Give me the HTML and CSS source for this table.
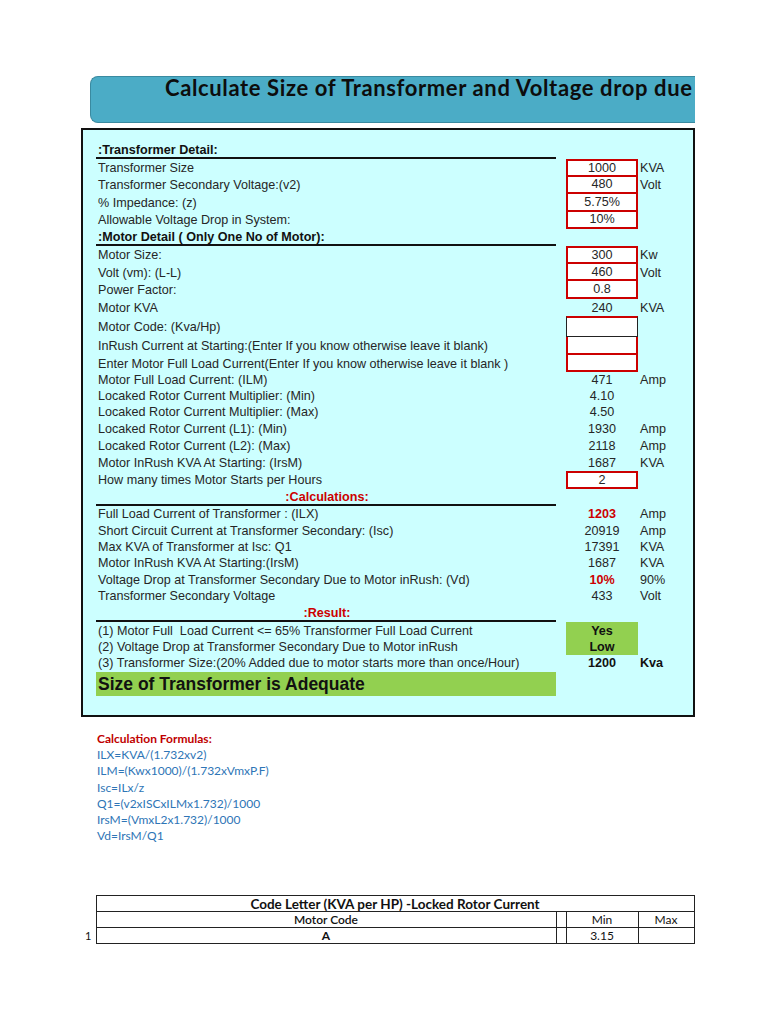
FILE: index.html
```html
<!DOCTYPE html>
<html>
<head>
<meta charset="utf-8">
<link rel="stylesheet" href="styles.css">
</head>
<body>
<div class="page">
  <div class="title">Calculate Size of Transformer and Voltage drop due</div>

  <div class="sheet">
    <div class="rows">
      <div class="row"><div class="label head">:Transformer Detail:</div></div>
      <div class="row"><div class="label">Transformer Size</div><div class="val in">1000</div><div class="unit">KVA</div></div>
      <div class="row"><div class="label">Transformer Secondary Voltage:(v2)</div><div class="val in join">480</div><div class="unit">Volt</div></div>
      <div class="row"><div class="label">% Impedance: (z)</div><div class="val in join">5.75%</div></div>
      <div class="row"><div class="label">Allowable Voltage Drop in System:</div><div class="val in join">10%</div></div>
      <div class="row"><div class="label head">:Motor Detail ( Only One No of Motor):</div></div>
      <div class="row"><div class="label">Motor Size:</div><div class="val in">300</div><div class="unit">Kw</div></div>
      <div class="row"><div class="label">Volt (vm): (L-L)</div><div class="val in join">460</div><div class="unit">Volt</div></div>
      <div class="row"><div class="label">Power Factor:</div><div class="val in join">0.8</div></div>
      <div class="row"><div class="label">Motor KVA</div><div class="val">240</div><div class="unit">KVA</div></div>
      <div class="row"><div class="label">Motor Code: (Kva/Hp)</div><div class="val code"></div></div>
      <div class="row"><div class="label">InRush Current at Starting:(Enter If you know otherwise leave it blank)</div><div class="val in join"></div></div>
      <div class="row"><div class="label">Enter Motor Full Load Current(Enter If you know otherwise leave it blank )</div><div class="val in join"></div></div>
      <div class="row"><div class="label">Motor Full Load Current: (ILM)</div><div class="val">471</div><div class="unit">Amp</div></div>
      <div class="row"><div class="label">Locaked Rotor Current Multiplier: (Min)</div><div class="val">4.10</div></div>
      <div class="row"><div class="label">Locaked Rotor Current Multiplier: (Max)</div><div class="val">4.50</div></div>
      <div class="row"><div class="label">Locaked Rotor Current (L1): (Min)</div><div class="val">1930</div><div class="unit">Amp</div></div>
      <div class="row"><div class="label">Locaked Rotor Current (L2): (Max)</div><div class="val">2118</div><div class="unit">Amp</div></div>
      <div class="row"><div class="label">Motor InRush KVA At Starting: (IrsM)</div><div class="val">1687</div><div class="unit">KVA</div></div>
      <div class="row"><div class="label">How many times Motor Starts per Hours</div><div class="val in">2</div></div>
      <div class="row"><div class="label head center red">:Calculations:</div></div>
      <div class="row"><div class="label">Full Load Current of Transformer : (ILX)</div><div class="val red strong">1203</div><div class="unit">Amp</div></div>
      <div class="row"><div class="label">Short Circuit Current at Transformer Secondary: (Isc)</div><div class="val">20919</div><div class="unit">Amp</div></div>
      <div class="row"><div class="label">Max KVA of Transformer at Isc: Q1</div><div class="val">17391</div><div class="unit">KVA</div></div>
      <div class="row"><div class="label">Motor InRush KVA At Starting:(IrsM)</div><div class="val">1687</div><div class="unit">KVA</div></div>
      <div class="row"><div class="label">Voltage Drop at Transformer Secondary Due to Motor inRush: (Vd)</div><div class="val red strong">10%</div><div class="unit">90%</div></div>
      <div class="row"><div class="label">Transformer Secondary Voltage</div><div class="val">433</div><div class="unit">Volt</div></div>
      <div class="row"><div class="label head center red">:Result:</div></div>
      <div class="row"><div class="label">(1) Motor Full&nbsp; Load Current &lt;= 65% Transformer Full Load Current</div><div class="val ok">Yes</div></div>
      <div class="row"><div class="label">(2) Voltage Drop at Transformer Secondary Due to Motor inRush</div><div class="val ok">Low</div></div>
      <div class="row"><div class="label">(3) Transformer Size:(20% Added due to motor starts more than once/Hour)</div><div class="val strong">1200</div><div class="unit strong">Kva</div></div>
    </div>
    <div class="verdict">Size of Transformer is Adequate</div>
  </div>

  <div class="formulas">
    <div class="f-title">Calculation Formulas:</div>
    <div>ILX=KVA/(1.732xv2)</div>
    <div>ILM=(Kwx1000)/(1.732xVmxP.F)</div>
    <div>Isc=ILx/z</div>
    <div>Q1=(v2xISCxILMx1.732)/1000</div>
    <div>IrsM=(VmxL2x1.732)/1000</div>
    <div>Vd=IrsM/Q1</div>
  </div>

  <table class="codes">
    <colgroup>
      <col class="c-num"><col class="c-code"><col class="c-gap"><col class="c-min"><col class="c-max">
    </colgroup>
    <tr><td class="num"></td><th colspan="4" class="t-head">Code Letter (KVA per HP) -Locked Rotor Current</th></tr>
    <tr><td class="num"></td><th class="t-sub">Motor Code</th><td></td><td class="t-col">Min</td><td class="t-col">Max</td></tr>
    <tr><td class="num">1</td><td class="t-letter">A</td><td></td><td class="t-col">3.15</td><td></td></tr>
  </table>
</div>
</body>
</html>
```

FILE: styles.css
```css
* { box-sizing: border-box; }

body {
  margin: 0;
  background: #ffffff;
  font-family: "Liberation Sans", Arial, sans-serif;
  color: #262626;
}

.page {
  width: 768px;
  padding-top: 76px;
}

/* ---------- title ---------- */
.title {
  margin-left: 90px;
  width: 605px;
  height: 47px;
  background: #4bacc6;
  border: 1px solid #3a8aa0;
  border-right: 0;
  border-radius: 8px 0 0 8px;
  padding-left: 74px;
  font-family: Lato, "Open Sans", sans-serif;
  font-weight: 700;
  font-size: 22px;
  line-height: 22px;
  letter-spacing: 0.62px;
  color: #0d0d0d;
  white-space: nowrap;
}

/* ---------- sheet ---------- */
.sheet {
  margin-top: 5px;
  margin-left: 81px;
  width: 614px;
  height: 589px;
  border: 2px solid #111;
  background: #ccffff;
  padding: 12px 0 0 13px;
}

.rows {
  display: grid;
  grid-template-rows: 17px 17.5px 17.5px 17.5px 17.5px 17px 18px 17px 18px 17px 21px 18px 17px 16px 16px 16px 17px 17px 17px 18px 17px 16px 17px 16px 16px 17px 16px 18px 17px 16px 16px;
  font-size: 12.6px;
}

.row {
  display: flex;
}

.label {
  width: 460px;
  padding-left: 2px;
  display: flex;
  align-items: center;
  white-space: nowrap;
}

.label.head {
  font-weight: 700;
  color: #111;
  border-bottom: 2px solid #111;
  padding-top: 1px;
}

.label.center {
  justify-content: center;
}

.red {
  color: #cc0000 !important;
}

.strong {
  font-weight: 700;
  color: #111;
}

.val {
  width: 72px;
  margin-left: 10px;
  display: flex;
  align-items: center;
  justify-content: center;
}

.val.in {
  background: #ffffff;
  border: 2px solid #cc0000;
}

.val.in.join {
  border-top: 0;
}

.val.code {
  background: #ffffff;
  border: 1px solid #222;
  border-top: 2px solid #cc0000;
}

.val.ok {
  background: #92d050;
  font-weight: 700;
  color: #111;
}

.unit {
  padding-left: 2px;
  display: flex;
  align-items: center;
}

.verdict {
  margin-top: 1px;
  width: 460px;
  height: 24px;
  background: #92d050;
  padding-left: 2px;
  font-size: 17.5px;
  font-weight: 700;
  color: #111;
  display: flex;
  align-items: center;
}

/* ---------- formulas ---------- */
.formulas {
  margin-top: 14px;
  margin-left: 97px;
  font-family: Lato, "Open Sans", sans-serif;
  font-size: 12px;
  line-height: 16.2px;
  color: #2e75b6;
}

.f-title {
  color: #c00000;
  font-weight: 700;
  font-size: 12px;
}

/* ---------- code table ---------- */
.codes {
  margin-top: 51px;
  margin-left: 80px;
  border-collapse: collapse;
  font-family: Lato, "Open Sans", sans-serif;
  font-size: 12px;
  color: #111;
  table-layout: fixed;
  width: 614px;
}

.c-num { width: 16px; }
.c-code { width: 460px; }
.c-gap { width: 10px; }
.c-min { width: 72px; }
.c-max { width: 56px; }

.codes th,
.codes td {
  height: 16px;
  padding: 0;
  border: 1px solid #222;
  text-align: center;
  line-height: 14px;
}

.codes td.num {
  border: 0;
  text-align: right;
  padding-right: 4px;
  font-size: 11px;
}

.t-head {
  font-weight: 700;
  font-size: 13.5px;
}

.t-sub {
  font-weight: 600;
}

.t-letter {
  font-weight: 700;
}

.t-col {
  font-weight: 400;
}
```
